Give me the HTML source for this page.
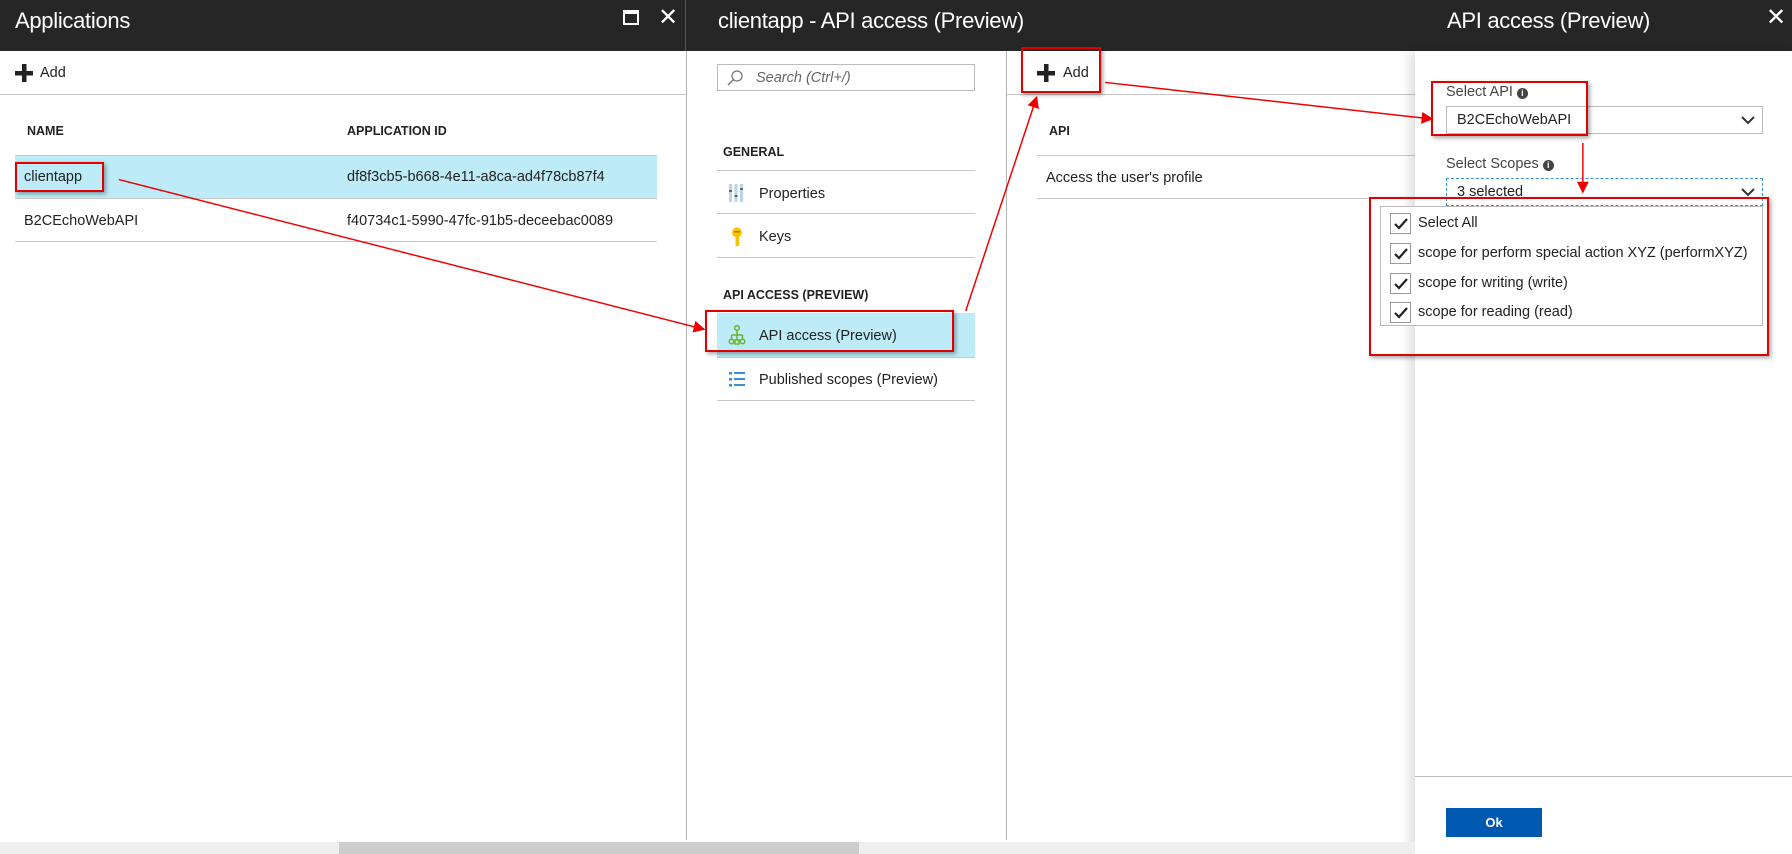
<!DOCTYPE html>
<html><head><meta charset="utf-8"><style>
*{margin:0;padding:0;box-sizing:border-box}
body{width:1792px;height:854px;overflow:hidden;background:#fff;font-family:"Liberation Sans",sans-serif;color:#222;position:relative}
.a{position:absolute}
.hdr{background:#262626;height:51px;top:0}
.t{color:#fff;font-size:22px;top:8px;letter-spacing:-0.3px}
.tx{font-size:14.5px;white-space:nowrap}
.b{font-weight:bold;font-size:12.5px}
.hl{height:1px;background:#c8c8c8}
.vl{width:1px;background:#b4b4b4}
.red{border:2px solid #e00000;box-shadow:2px 2px 4px rgba(0,0,0,.35)}
.cb{width:21px;height:21px;border:1px solid #999;background:#fff}
</style></head><body>
<div class="a hdr" style="left:0;width:1792px"></div>
<div class="a" style="left:685px;top:0;width:1px;height:51px;background:#555"></div>
<div class="a t" style="left:15px">Applications</div>
<div class="a" style="left:623px;top:10px;width:16px;height:15px;border:2px solid #fff;border-top-width:4px"></div>
<div class="a" style="left:658px;top:3px;color:#fff;font-size:24px">✕</div>
<div class="a t" style="left:718px">clientapp - API access (Preview)</div>
<div class="a t" style="left:1447px">API access (Preview)</div>
<div class="a" style="left:1766px;top:3px;color:#fff;font-size:24px">✕</div>

<svg class="a" style="left:15px;top:64px" width="18" height="18"><rect x="7" y="0" width="4.5" height="18" fill="#222"/><rect x="0" y="7" width="18" height="4.5" fill="#222"/></svg>
<div class="a tx" style="left:40px;top:65px">Add</div>
<div class="a hl" style="left:0;top:94px;width:686px"></div>
<div class="a b" style="left:27px;top:124px">NAME</div>
<div class="a b" style="left:347px;top:124px">APPLICATION ID</div>
<div class="a hl" style="left:15px;top:155px;width:642px"></div>
<div class="a" style="left:15px;top:156px;width:642px;height:42px;background:#bdebf7"></div>
<div class="a tx" style="left:24px;top:169px">clientapp</div>
<div class="a tx" style="left:347px;top:169px">df8f3cb5-b668-4e11-a8ca-ad4f78cb87f4</div>
<div class="a hl" style="left:15px;top:198px;width:642px"></div>
<div class="a tx" style="left:24px;top:213px">B2CEchoWebAPI</div>
<div class="a tx" style="left:347px;top:213px">f40734c1-5990-47fc-91b5-deceebac0089</div>
<div class="a hl" style="left:15px;top:241px;width:642px"></div>
<div class="a red" style="left:15px;top:162px;width:89px;height:30px"></div>
<div class="a vl" style="left:686px;top:51px;height:789px"></div>

<div class="a" style="left:717px;top:64px;width:258px;height:27px;border:1px solid #bbb"></div>
<svg class="a" style="left:726px;top:69px" width="18" height="18"><circle cx="11" cy="7" r="5" fill="none" stroke="#777" stroke-width="1.3"/><line x1="7" y1="11" x2="2" y2="16" stroke="#777" stroke-width="1.5"/></svg>
<div class="a tx" style="left:756px;top:70px;color:#666;font-style:italic">Search (Ctrl+/)</div>
<div class="a b" style="left:723px;top:145px">GENERAL</div>
<div class="a hl" style="left:717px;top:170px;width:258px"></div>
<svg class="a" style="left:728px;top:184px" width="16" height="18"><rect x="1" y="0" width="3" height="18" fill="#b6d5ea"/><rect x="6.5" y="0" width="3" height="18" fill="#b6d5ea"/><rect x="12" y="0" width="3" height="18" fill="#b6d5ea"/><rect x="1" y="6" width="3" height="2" fill="#666"/><rect x="6.5" y="11" width="3" height="2" fill="#666"/><rect x="12" y="4" width="3" height="2" fill="#666"/></svg>
<div class="a tx" style="left:759px;top:186px">Properties</div>
<div class="a hl" style="left:717px;top:213px;width:258px"></div>
<svg class="a" style="left:731px;top:227px" width="12" height="20"><ellipse cx="6" cy="5.5" rx="5" ry="5" fill="#f8c400"/><rect x="4.5" y="9" width="3.5" height="10" fill="#f8c400"/><rect x="3" y="4" width="6" height="1.5" fill="#a07c00"/></svg>
<div class="a tx" style="left:759px;top:229px">Keys</div>
<div class="a hl" style="left:717px;top:257px;width:258px"></div>
<div class="a b" style="left:723px;top:288px">API ACCESS (PREVIEW)</div>
<div class="a" style="left:717px;top:313px;width:258px;height:44px;background:#bdebf7"></div>
<svg class="a" style="left:728px;top:325px" width="18" height="20" fill="none" stroke="#6ab42d" stroke-width="1.5"><circle cx="9" cy="3" r="2.3"/><line x1="9" y1="5.3" x2="9" y2="15"/><line x1="3.5" y1="10" x2="14.5" y2="10"/><line x1="3.5" y1="10" x2="3.5" y2="14"/><line x1="14.5" y1="10" x2="14.5" y2="14"/><circle cx="3.5" cy="16.5" r="2.3"/><rect x="7" y="15" width="4" height="4"/><circle cx="14.5" cy="16.5" r="2.3"/></svg>
<div class="a tx" style="left:759px;top:328px">API access (Preview)</div>
<div class="a hl" style="left:717px;top:357px;width:258px"></div>
<svg class="a" style="left:729px;top:371px" width="16" height="16" fill="#3a8fd0"><rect x="0" y="1" width="3" height="2.5"/><rect x="5" y="1" width="11" height="2"/><rect x="0" y="7" width="3" height="2.5"/><rect x="5" y="7" width="11" height="2"/><rect x="0" y="13" width="3" height="2.5"/><rect x="5" y="13" width="11" height="2"/></svg>
<div class="a tx" style="left:759px;top:372px">Published scopes (Preview)</div>
<div class="a hl" style="left:717px;top:400px;width:258px"></div>
<div class="a red" style="left:705px;top:310px;width:249px;height:42px"></div>
<div class="a vl" style="left:1006px;top:51px;height:789px"></div>

<svg class="a" style="left:1037px;top:64px" width="18" height="18"><rect x="7" y="0" width="4.5" height="18" fill="#222"/><rect x="0" y="7" width="18" height="4.5" fill="#222"/></svg>
<div class="a tx" style="left:1063px;top:65px">Add</div>
<div class="a hl" style="left:1007px;top:94px;width:410px"></div>
<div class="a red" style="left:1021px;top:47px;width:80px;height:46px"></div>
<div class="a b" style="left:1049px;top:124px">API</div>
<div class="a hl" style="left:1037px;top:155px;width:380px"></div>
<div class="a tx" style="left:1046px;top:170px">Access the user's profile</div>
<div class="a hl" style="left:1037px;top:198px;width:380px"></div>

<div class="a" style="left:1415px;top:51px;width:377px;height:803px;background:#fff;box-shadow:-6px 0 10px rgba(0,0,0,.12)"></div>
<div class="a tx" style="left:1446px;top:84px;color:#444">Select API <span style="display:inline-block;width:11px;height:11px;border-radius:50%;background:#444;color:#fff;font-size:9px;text-align:center;line-height:11px;font-weight:bold">i</span></div>
<div class="a" style="left:1446px;top:106px;width:317px;height:28px;border:1px solid #bbb"></div>
<div class="a tx" style="left:1457px;top:112px">B2CEchoWebAPI</div>
<svg class="a" style="left:1741px;top:115px" width="14" height="10"><polyline points="1,2 7,8 13,2" fill="none" stroke="#333" stroke-width="2"/></svg>
<div class="a red" style="left:1431px;top:81px;width:157px;height:55px"></div>
<div class="a tx" style="left:1446px;top:156px;color:#444">Select Scopes <span style="display:inline-block;width:11px;height:11px;border-radius:50%;background:#444;color:#fff;font-size:9px;text-align:center;line-height:11px;font-weight:bold">i</span></div>
<div class="a" style="left:1446px;top:178px;width:317px;height:28px;border:1px dashed #3b8fd6"></div>
<div class="a tx" style="left:1457px;top:184px">3 selected</div>
<svg class="a" style="left:1741px;top:187px" width="14" height="10"><polyline points="1,2 7,8 13,2" fill="none" stroke="#333" stroke-width="2"/></svg>
<div class="a" style="left:1380px;top:206px;width:383px;height:120px;border:1px solid #bbb;background:#fff"></div>
<div class="a cb" style="left:1390px;top:213px"></div><div class="a tx" style="left:1418px;top:215px">Select All</div>
<div class="a cb" style="left:1390px;top:243px"></div><div class="a tx" style="left:1418px;top:245px">scope for perform special action XYZ (performXYZ)</div>
<div class="a cb" style="left:1390px;top:273px"></div><div class="a tx" style="left:1418px;top:275px">scope for writing (write)</div>
<div class="a cb" style="left:1390px;top:302px"></div><div class="a tx" style="left:1418px;top:304px">scope for reading (read)</div>
<svg class="a" style="left:1390px;top:213px" width="22" height="112" fill="none" stroke="#222" stroke-width="2.2"><polyline points="5,11 9,15 17,6"/><polyline points="5,41 9,45 17,36"/><polyline points="5,71 9,75 17,66"/><polyline points="5,100 9,104 17,95"/></svg>
<div class="a red" style="left:1369px;top:197px;width:400px;height:159px"></div>
<div class="a hl" style="left:1415px;top:776px;width:377px;background:#bbb"></div>
<div class="a" style="left:1446px;top:808px;width:96px;height:29px;background:#0059b0;color:#fff;font-weight:bold;font-size:13px;text-align:center;line-height:29px">Ok</div>

<div class="a" style="left:0;top:842px;width:1415px;height:12px;background:#efefef"></div>
<div class="a" style="left:339px;top:842px;width:520px;height:12px;background:#cdcdcd"></div>

<svg class="a" style="left:0;top:0" width="1792" height="854" viewBox="0 0 1568 747">
<defs><marker id="m" markerWidth="8" markerHeight="8" refX="7" refY="4" orient="auto"><path d="M0,0 L8,4 L0,8 z" fill="#e00"/></marker></defs>
<g stroke="#e00" stroke-width="1.3" fill="none" marker-end="url(#m)">
<line x1="104" y1="157" x2="616" y2="288"/>
<line x1="845" y1="272" x2="907" y2="85"/>
<line x1="967" y1="72" x2="1253" y2="104"/>
<line x1="1385" y1="125" x2="1385" y2="168"/>
</g></svg>
</body></html>
